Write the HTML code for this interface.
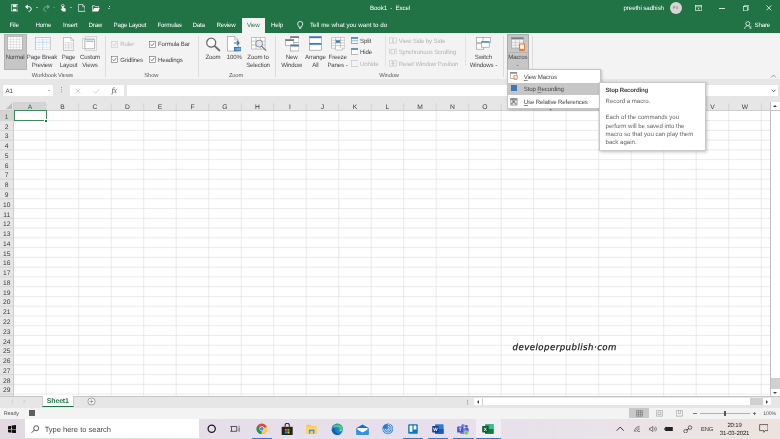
<!DOCTYPE html>
<html><head><meta charset="utf-8"><title>Book1 - Excel</title>
<style>
*{box-sizing:border-box;margin:0;padding:0}
html,body{width:780px;height:439px;overflow:hidden;background:#fff}
body{font-family:"Liberation Sans",sans-serif;font-size:6px;color:#333;position:relative;text-rendering:geometricPrecision}
.a{position:absolute;white-space:nowrap}
.c{text-align:center}
#green{left:0;top:0;width:780px;height:33px;background:#217346}
.tt{margin-top:1px;color:#fff;font-size:6.2px;line-height:8px}
.tab{margin-top:1px;color:#fff;font-size:6.2px;line-height:8px;top:21px;letter-spacing:-.2px}
#ribbon{left:0;top:33px;width:780px;height:46px;background:#f3f3f3}
.sep{width:1px;top:36px;height:41px;background:#dcdcdc}
.rl{margin-top:.7px;font-size:6.1px;line-height:8px;letter-spacing:-.15px;color:#464646;text-align:center;transform:translateX(-50%)}
.gl{margin-top:1.3px;font-size:5.8px;line-height:7px;letter-spacing:-.15px;color:#5a5a5a;top:72px;transform:translateX(-50%)}
.sm{margin-top:1.2px;font-size:6.1px;line-height:8px;letter-spacing:-.15px;color:#464646}
.dis{color:#b5b5b5}
.cb{width:6.4px;height:6.4px;border:0.8px solid #777;background:#fff}
#fbar{left:0;top:79px;width:780px;height:23px;background:#e6e6e6}
#grid{left:0;top:101px;width:780px;height:295px;background:#fff}
.ch{top:101.9px;height:8.9px;font-size:6.7px;line-height:11.4px;color:#3a3a3a;text-align:center;width:32.5px}
.rh{left:0;width:13.4px;font-size:6.7px;line-height:13.2px;color:#3a3a3a;text-align:center;height:9.77px}
.ar{display:inline-block;width:0;height:0;border-left:1.3px solid transparent;border-right:1.3px solid transparent;border-top:1.5px solid #666;margin-left:1.8px;vertical-align:1.5px}
u{text-decoration-thickness:.5px;text-underline-offset:.6px;text-decoration-color:#8a8a8a}
</style></head><body><div style="position:absolute;left:0;top:0;width:780px;height:439px;will-change:transform">

<div class="a" id="green"></div>

<!-- title bar -->
<div class="a tt" style="left:370px;top:3.5px;letter-spacing:-.1px">Book1&nbsp; -&nbsp; Excel</div>
<div class="a tt" style="left:623.5px;top:3.5px;letter-spacing:-.1px">preethi sadhish</div>
<div class="a" style="left:669.5px;top:2px;width:12px;height:12px;border-radius:50%;background:#d9d5d6;color:#666;font-size:4px;line-height:12px;text-align:center">PS</div>

<!-- tabs -->
<div class="a" style="left:242.2px;top:17.7px;width:23.1px;height:15.3px;background:#f3f3f3"></div>
<div class="a tab" style="left:9.5px">File</div>
<div class="a tab" style="left:35.5px">Home</div>
<div class="a tab" style="left:63px">Insert</div>
<div class="a tab" style="left:88.5px">Draw</div>
<div class="a tab" style="left:113.5px">Page Layout</div>
<div class="a tab" style="left:157.5px">Formulas</div>
<div class="a tab" style="left:192.5px">Data</div>
<div class="a tab" style="left:216.5px">Review</div>
<div class="a tab" style="left:247px;color:#217346">View</div>
<div class="a tab" style="left:271px">Help</div>
<div class="a tab" style="left:310px;letter-spacing:.03px">Tell me what you want to do</div>
<div class="a tab" style="left:754.5px">Share</div>


<!-- QAT -->
<svg class="a" style="left:10.600px;top:4.400px" width="7.600" height="7.400" viewBox="0 0 7.600 7.400"><path d="M.4 .4h6l.8 .8v5.800h-6.800z" fill="none" stroke="#fff" stroke-width=".7"/><rect x="1.800" y=".6" width="3.800" height="2.600" fill="#fff" opacity=".9"/><rect x="2" y="4.800" width="3.400" height="2.200" fill="#fff" opacity=".9"/></svg>
<svg class="a" style="left:24.800px;top:4.400px" width="8" height="7.600" viewBox="0 0 8 7.600"><path d="M.8 2.800h4a2.400 2.400 0 0 1 0 4.400h-1.200" fill="none" stroke="#fff" stroke-width="1"/><path d="M0 2.800l2.800-2.400v4.800z" fill="#fff"/></svg>
<div class="a" style="left:35.600px;top:7.400px;width:0;height:0;border-left:1.200px solid transparent;border-right:1.200px solid transparent;border-top:1.400px solid #fff"></div>
<svg class="a" style="left:42.400px;top:4.400px;opacity:.38" width="8" height="7.600" viewBox="0 0 8 7.600"><path d="M7.200 2.800h-4a2.400 2.400 0 0 0 0 4.400h1.200" fill="none" stroke="#fff" stroke-width="1"/><path d="M8 2.800l-2.800-2.400v4.800z" fill="#fff"/></svg>
<div class="a" style="left:53.200px;top:7.400px;width:0;height:0;border-left:1.200px solid transparent;border-right:1.200px solid transparent;border-top:1.400px solid #fff;opacity:.4"></div>
<svg class="a" style="left:59.600px;top:4px" width="6.400" height="8" viewBox="0 0 6.400 8"><circle cx="2.800" cy="1.800" r="1.400" fill="none" stroke="#fff" stroke-width=".6"/><path d="M2.200 2v3l-1.200-.6l-.4 .6l2 2.600h3v-3l-2-.8v-1.800z" fill="#fff"/></svg>
<div class="a" style="left:69.800px;top:7.400px;width:0;height:0;border-left:1.200px solid transparent;border-right:1.200px solid transparent;border-top:1.400px solid #fff"></div>
<svg class="a" style="left:77.800px;top:4.200px" width="7.400" height="7.800" viewBox="0 0 7.400 7.800"><path d="M.4 .4h4.200l2.400 2.400v4.600h-6.600z" fill="none" stroke="#fff" stroke-width=".7"/><path d="M4.600 .4v2.400h2.400" fill="none" stroke="#fff" stroke-width=".5"/></svg>
<svg class="a" style="left:91.600px;top:4.600px" width="8" height="7" viewBox="0 0 8 7"><path d="M.4 6.400v-5.600h2.400l.8 .8h3v1.200" fill="none" stroke="#fff" stroke-width=".7"/><path d="M.4 6.400l1.600-3.400h5.800l-1.600 3.400z" fill="#fff"/></svg>
<div class="a" style="left:108.800px;top:6.200px;width:1.600px;height:.6px;background:#fff"></div>
<div class="a" style="left:108.400px;top:8px;width:0;height:0;border-left:1.200px solid transparent;border-right:1.200px solid transparent;border-top:1.400px solid #fff"></div>
<!-- window controls -->
<svg class="a" style="left:694.600px;top:5.200px" width="7.200" height="5.760" viewBox="0 0 8 6.400"><rect x=".4" y=".4" width="7.200" height="5.600" fill="none" stroke="#fff" stroke-width=".7"/><path d="M.4 2h7.200" stroke="#fff" stroke-width=".6"/><path d="M2.800 4.600l1.200-1.400l1.200 1.400z" fill="#fff"/></svg>
<div class="a" style="left:719px;top:7.800px;width:6.400px;height:.7px;background:#fff;opacity:.8"></div>
<svg class="a" style="left:742.600px;top:4.600px" width="6.200" height="6.200" viewBox="0 0 7 7"><rect x=".4" y="1.800" width="4.800" height="4.800" fill="none" stroke="#fff" stroke-width=".7"/><path d="M1.800 1.800v-1.400h4.800v4.800h-1.400" fill="none" stroke="#fff" stroke-width=".7"/></svg>
<svg class="a" style="left:765.800px;top:5px" width="5.800" height="5.800" viewBox="0 0 6.400 6.400"><path d="M.4 .4l5.600 5.600M6 .4l-5.600 5.600" stroke="#fff" stroke-width=".8"/></svg>
<!-- bulb, share -->
<svg class="a" style="left:297.400px;top:20.600px" width="6.400" height="8.800" viewBox="0 0 6.400 8.800"><path d="M2 6.200c0-1.200-1.400-1.800-1.400-3.200a2.600 2.600 0 0 1 5.200 0c0 1.400-1.400 2-1.400 3.200z" fill="none" stroke="#fff" stroke-width=".8"/><path d="M2.100 7.200h2.200M2.400 8.300h1.600" stroke="#fff" stroke-width=".8"/></svg>
<svg class="a" style="left:744.400px;top:21px" width="8" height="8.400" viewBox="0 0 8 8.400"><circle cx="3.800" cy="2.600" r="2" fill="none" stroke="#fff" stroke-width=".7"/><path d="M.6 8c0-2 1.400-3.200 3.200-3.200s3.200 1.200 3.200 3.200" fill="none" stroke="#fff" stroke-width=".7"/><path d="M5 7.600l2.600-2.600" stroke="#fff" stroke-width=".6"/></svg>

<!-- ribbon -->
<div class="a" id="ribbon"></div>
<div class="a sep" style="left:105.2px"></div>
<div class="a sep" style="left:198px"></div>
<div class="a sep" style="left:275px"></div>
<div class="a sep" style="left:384.8px;height:30px;background:#e2e2e2"></div>
<div class="a sep" style="left:465.3px;height:30px;background:#e2e2e2"></div>
<div class="a sep" style="left:502.8px"></div>
<div class="a sep" style="left:532px"></div>

<!-- workbook views -->
<div class="a" style="left:4px;top:34px;width:22.7px;height:35.6px;background:#c6c6c6;border:0.5px solid #b3b3b3"></div>
<svg class="a" style="left:7px;top:36.400px" width="16" height="14.400" viewBox="0 0 16 14.400"><rect x=".5" y=".5" width="14.800" height="13.400" fill="#fff" stroke="#9c9c9c" stroke-width=".6"/><path d="M3.500 .5v13.400M6.400 .5v13.400M9.400 .5v13.400M12.400 .5v13.400M.5 3.200h14.800M.5 5.900h14.800M.5 8.600h14.800M.5 11.300h14.800" stroke="#c4c4c4" stroke-width=".45" fill="none"/></svg>
<svg class="a" style="left:34.800px;top:37px" width="16" height="13.400" viewBox="0 0 16 13.400"><rect x=".4" y=".4" width="14.800" height="12.600" fill="#fff" stroke="#a6a6a6" stroke-width=".6"/><path d="M4 .4v12.600M11.600 .4v12.600M.4 2.800h14.800M.4 7.800h14.800M.4 10.400h14.800" stroke="#cfe0f2" stroke-width=".6" fill="none"/><path d="M7.800 .4v12.600M.4 5.300h14.800" stroke="#a4c2e4" stroke-width=".6" fill="none"/></svg>
<svg class="a" style="left:62.800px;top:36.800px" width="11.400" height="14" viewBox="0 0 11.400 14"><path d="M.4 .4h7.400l3 3v10.200h-10.400z" fill="#fff" stroke="#949494" stroke-width=".6"/><path d="M7.800 .4v3h3" fill="none" stroke="#949494" stroke-width=".5"/><path d="M2 5.600h7.200v6.400h-7.200zM2 7.200h7.200M2 8.800h7.200M2 10.400h7.200M5.600 5.600v6.400" fill="none" stroke="#c2c2c2" stroke-width=".45"/></svg>
<svg class="a" style="left:82.400px;top:36.200px" width="15.400" height="15" viewBox="0 0 15.400 15"><rect x=".4" y="2.800" width="11.800" height="9.800" fill="#f7f7f7" stroke="#b4b4b4" stroke-width=".5"/><rect x="3" y=".4" width="11.800" height="14.200" fill="none" stroke="#b8b8b8" stroke-width=".5"/><rect x="3" y="3.300" width="9.700" height="9.500" fill="#fff" stroke="#9a9a9a" stroke-width=".6"/><rect x="4.100" y="4.500" width="7.500" height="1.600" fill="#a9c7ea"/></svg>
<div class="a rl" style="left:15px;top:53.4px">Normal</div>
<div class="a rl" style="left:42px;top:53.4px">Page Break<br>Preview</div>
<div class="a rl" style="left:68.5px;top:53.4px">Page<br>Layout</div>
<div class="a rl" style="left:90px;top:53.4px">Custom<br>Views</div>
<div class="a gl" style="left:52.3px">Workbook Views</div>

<!-- show -->
<svg class="a" style="left:111.0px;top:40.6px" width="7" height="7" viewBox="0 0 7 7"><rect x=".5" y=".5" width="6" height="6" fill="#f1f1f1" stroke="#c8c8c8" stroke-width=".6"/><path d="M1.700 3.500l1.200 1.300l2.400-3" fill="none" stroke="#c4c4c4" stroke-width=".65"/></svg>
<svg class="a" style="left:149.0px;top:40.6px" width="7" height="7" viewBox="0 0 7 7"><rect x=".5" y=".5" width="6" height="6" fill="#fff" stroke="#6e6e6e" stroke-width=".6"/><path d="M1.700 3.500l1.200 1.300l2.400-3" fill="none" stroke="#3c3c3c" stroke-width=".65"/></svg>
<svg class="a" style="left:111.0px;top:56.1px" width="7" height="7" viewBox="0 0 7 7"><rect x=".5" y=".5" width="6" height="6" fill="#fff" stroke="#6e6e6e" stroke-width=".6"/><path d="M1.700 3.500l1.200 1.300l2.400-3" fill="none" stroke="#3c3c3c" stroke-width=".65"/></svg>
<svg class="a" style="left:149.0px;top:56.1px" width="7" height="7" viewBox="0 0 7 7"><rect x=".5" y=".5" width="6" height="6" fill="#fff" stroke="#6e6e6e" stroke-width=".6"/><path d="M1.700 3.500l1.200 1.300l2.400-3" fill="none" stroke="#3c3c3c" stroke-width=".65"/></svg>
<div class="a sm dis" style="left:120.3px;top:40px">Ruler</div>
<div class="a sm" style="left:158px;top:40px">Formula Bar</div>
<div class="a sm" style="left:120.3px;top:55.8px">Gridlines</div>
<div class="a sm" style="left:158px;top:55.8px">Headings</div>
<div class="a gl" style="left:151.3px">Show</div>

<!-- zoom group -->
<svg class="a" style="left:205px;top:37px" width="16" height="15" viewBox="0 0 16 15"><circle cx="6.200" cy="5.600" r="4.500" fill="#fbfbfb" stroke="#6b6b6b" stroke-width="1.300"/><path d="M9.800 9.200l4.600 4.300" stroke="#6b6b6b" stroke-width="1.800" stroke-linecap="round"/></svg>
<svg class="a" style="left:227px;top:36.4px" width="14.4" height="15.6" viewBox="0 0 14.4 15.6"><path d="M.5 .5h7.3l3.4 3.4v11.2h-10.7z" fill="#fff" stroke="#9a9a9a" stroke-width=".7"/><path d="M7.8 .5v3.4h3.4" fill="none" stroke="#9a9a9a" stroke-width=".6"/><path d="M7 7h4.6M9.8 4.9l2.2 2.1l-2.2 2.1" fill="none" stroke="#2e75b6" stroke-width="1.2"/><rect x="7" y="11" width="7" height="4.2" fill="#2e75b6"/><path d="M8.2 12.2v1.9M9.8 12.2h1.2v1.9h-1.2zM12 12.2h1.2v1.9h-1.2z" stroke="#fff" stroke-width=".4" fill="none"/></svg>
<svg class="a" style="left:250.6px;top:37px" width="16" height="15" viewBox="0 0 16 15"><path d="M.5 .5h13.6v11.6h-13.6zM.5 4.2h13.6M.5 8h13.6M5 .5v11.6M9.6 .5v11.6" fill="#fff" stroke="#a0a0a0" stroke-width=".6"/><circle cx="8.2" cy="6.6" r="3.5" fill="#dbe8f6" stroke="#777" stroke-width=".8"/><path d="M10.8 9.4l4 4" stroke="#777" stroke-width="1.3" stroke-linecap="round"/></svg>
<div class="a rl" style="left:213px;top:53.4px">Zoom</div>
<div class="a rl" style="left:234.2px;top:53.4px">100%</div>
<div class="a rl" style="left:258px;top:53.4px">Zoom to<br>Selection</div>
<div class="a gl" style="left:236px">Zoom</div>

<!-- window group -->
<svg class="a" style="left:284.6px;top:36.4px" width="14.6" height="15.4" viewBox="0 0 14.6 15.4"><rect x="5.6" y=".4" width="8.4" height="6" fill="#fff" stroke="#8c8c8c" stroke-width=".6"/><rect x="5.6" y=".4" width="8.4" height="1.6" fill="#7a7a7a"/><rect x=".4" y="3.4" width="8.4" height="6" fill="#fff" stroke="#8c8c8c" stroke-width=".6"/><rect x=".4" y="3.4" width="8.4" height="1.6" fill="#7a7a7a"/><rect x="5.6" y="8.8" width="8.4" height="6.2" fill="#fff" stroke="#8c8c8c" stroke-width=".6"/><rect x="5.6" y="8.8" width="8.4" height="1.7" fill="#3b7dc4"/></svg>
<svg class="a" style="left:309.4px;top:36.4px" width="12.8" height="14.6" viewBox="0 0 12.8 14.6"><rect x=".4" y=".4" width="12" height="13.8" fill="#fff" stroke="#8c8c8c" stroke-width=".6"/><rect x=".4" y=".4" width="12" height="1.8" fill="#3b7dc4"/><rect x=".4" y="7" width="12" height="1.8" fill="#3b7dc4"/></svg>
<svg class="a" style="left:331px;top:37px" width="14.4" height="13.6" viewBox="0 0 14.4 13.6"><path d="M.4 .4h13.6v10.8h-13.6zM.4 3.2h13.6M.4 6h13.6M.4 8.6h13.6M4.6 .4v10.8M9.4 .4v10.8" fill="#fff" stroke="#a2a2a2" stroke-width=".6"/><rect x="4.8" y="3.3" width="4.4" height="2.5" fill="#3b7dc4"/><path d="M4.6 10v3h6.8v-2" fill="#fff" stroke="#a2a2a2" stroke-width=".6"/></svg>
<div class="a rl" style="left:291.7px;top:53.4px">New<br>Window</div>
<div class="a rl" style="left:315.4px;top:53.4px">Arrange<br>All</div>
<div class="a rl" style="left:337.6px;top:53.4px">Freeze<br>Panes<i class="ar"></i></div>

<svg class="a" style="left:350.6px;top:37px" width="7.6" height="6.8" viewBox="0 0 7.6 6.8"><rect x=".4" y=".4" width="6.8" height="6" fill="#fff" stroke="#777" stroke-width=".6"/><rect x=".4" y=".4" width="6.8" height="1.4" fill="#3b7dc4"/><path d="M.4 3.8h6.8" stroke="#3b7dc4" stroke-width=".6"/></svg>
<svg class="a" style="left:350.6px;top:48.4px" width="7.6" height="6.8" viewBox="0 0 7.6 6.8"><rect x=".4" y=".4" width="6.8" height="6" fill="#fff" stroke="#8a8a8a" stroke-width=".6"/><rect x=".4" y=".4" width="6.8" height="1.4" fill="#3b7dc4"/></svg>
<svg class="a" style="left:350.6px;top:60.4px" width="7.6" height="6.8" viewBox="0 0 7.6 6.8"><rect x=".4" y=".4" width="6.8" height="6" fill="#f6f3f6" stroke="#c3bcc3" stroke-width=".6"/></svg>
<div class="a sm" style="left:360px;top:36.4px">Split</div>
<div class="a sm" style="left:360px;top:47.8px">Hide</div>
<div class="a sm dis" style="left:360px;top:59.8px">Unhide</div>

<svg class="a" style="left:389px;top:37px" width="8" height="6.8" viewBox="0 0 8 6.8"><path d="M.4 .8h3v5.4h-3zM4.4 .8h3v5.4h-3z" fill="#f6f6f6" stroke="#bdbdbd" stroke-width=".6"/></svg>
<svg class="a" style="left:389px;top:48.4px" width="8" height="6.8" viewBox="0 0 8 6.8"><path d="M.4 .4v6M2 1.4h3.6v4.4h-3.6zM7.2 .4v6" fill="none" stroke="#bdbdbd" stroke-width=".6"/></svg>
<svg class="a" style="left:389px;top:60.4px" width="8" height="6.8" viewBox="0 0 8 6.8"><path d="M.4 .6h3v5.6h-3zM4.4 .6h3v5.6h-3zM2 3.4h4" fill="#f6f6f6" stroke="#bdbdbd" stroke-width=".6"/></svg>
<div class="a sm dis" style="left:398.7px;top:36.4px">View Side by Side</div>
<div class="a sm dis" style="left:398.7px;top:47.8px">Synchronous Scrolling</div>
<div class="a sm dis" style="left:398.7px;top:59.8px">Reset Window Position</div>

<svg class="a" style="left:476px;top:36.8px" width="15" height="12.8" viewBox="0 0 15 12.8"><rect x=".4" y=".4" width="7.4" height="5.4" fill="#fff" stroke="#8c8c8c" stroke-width=".6"/><rect x=".4" y="6.8" width="7.4" height="5.4" fill="#fff" stroke="#8c8c8c" stroke-width=".6"/><rect x="7" y=".4" width="7.4" height="5.4" fill="#fff" stroke="#8c8c8c" stroke-width=".6"/><rect x="5.6" y="4.4" width="7.6" height="5.8" fill="#fff" stroke="#8c8c8c" stroke-width=".6"/><rect x="5.6" y="4.4" width="7.6" height="1.3" fill="#3b7dc4"/></svg>
<div class="a rl" style="left:483.4px;top:53.4px">Switch<br>Windows<i class="ar"></i></div>
<div class="a gl" style="left:389px">Window</div>

<!-- macros -->
<div class="a" style="left:507.2px;top:34px;width:21.8px;height:35.6px;background:#c6c6c6;border:0.5px solid #ababab"></div><div class="a" style="left:507.6px;top:51.8px;width:21px;height:.6px;background:#b2b2b2"></div>
<svg class="a" style="left:510.6px;top:36.6px" width="14.8" height="14.4" viewBox="0 0 14.8 14.4"><rect x=".4" y=".4" width="12" height="10.6" fill="#f4f4f4" stroke="#9a9a9a" stroke-width=".6"/><rect x=".4" y=".4" width="12" height="2" fill="#7d7d7d"/><path d="M.4 5.4h12M.4 8.2h12M4.4 2.4v8.6M8.4 2.4v8.6" stroke="#b5b5b5" stroke-width=".5"/><path d="M8 6.4h6.2v6.6l-1.4 1h-4.8z" fill="#ed7d31"/><rect x="9.2" y="7.6" width="3.8" height="4.2" fill="#fff"/></svg>
<div class="a rl" style="left:517.8px;top:53.4px">Macros<br><i class="ar" style="margin-left:0"></i></div>

<svg class="a" style="left:769.6px;top:74px" width="7" height="4.400" viewBox="0 0 7 4.400"><path d="M1 3.600l2.500-2.600l2.500 2.600" fill="none" stroke="#777" stroke-width=".7"/></svg>

<!-- formula bar -->
<div class="a" id="fbar"></div>

<div class="a" style="left:2.5px;top:84.7px;width:50.8px;height:11.6px;background:#fff"></div>
<div class="a" style="left:5.5px;top:87.9px;font-size:6.2px;line-height:8px;color:#444;letter-spacing:-.1px">A1</div>
<div class="a" style="left:47.6px;top:89.6px;width:0;height:0;border-left:1.7px solid transparent;border-right:1.7px solid transparent;border-top:1.9px solid #666"></div>
<div class="a" style="left:61.3px;top:87.4px;width:.8px;height:.8px;background:#999;box-shadow:0 2.2px 0 #999,0 4.4px 0 #999"></div>
<div class="a" style="left:69.7px;top:84.7px;width:54.3px;height:11.6px;background:#fff"></div>
<svg class="a" style="left:75px;top:87.6px" width="6" height="6" viewBox="0 0 6 6"><path d="M.8 .8l4.4 4.4M5.200 .8l-4.400 4.400" stroke="#c2c2c2" stroke-width=".7"/></svg>
<svg class="a" style="left:93.4px;top:87.6px" width="7" height="6" viewBox="0 0 7 6"><path d="M.8 3.200l1.800 2l3.600-4.400" fill="none" stroke="#c2c2c2" stroke-width=".7"/></svg>
<div class="a" style="left:111.6px;top:85.6px;font-family:'Liberation Serif',serif;font-style:italic;font-size:8px;line-height:9px;color:#555;letter-spacing:-.3px">fx</div>
<div class="a" style="left:126.7px;top:84.7px;width:651.5px;height:11.6px;background:#fff"></div>
<svg class="a" style="left:771.200px;top:88.800px" width="5.400" height="3.600" viewBox="0 0 5.400 3.600"><path d="M.7 .7l2 2l2-2" fill="none" stroke="#555" stroke-width=".9"/></svg>

<!--GRID_START-->
<div class="a" style="left:0;top:101.9px;width:780px;height:293.7px;background:#fff"></div>
<div class="a" style="left:0;top:101.9px;width:771px;height:8.9px;background:#e6e6e6"></div>
<div class="a" style="left:0;top:110.8px;width:13.7px;height:284.8px;background:#e6e6e6"></div>
<svg class="a" style="left:0;top:0" width="780" height="439" viewBox="0 0 780 439"><path d="M46.20 110.8V395.6M78.70 110.8V395.6M111.20 110.8V395.6M143.70 110.8V395.6M176.20 110.8V395.6M208.70 110.8V395.6M241.20 110.8V395.6M273.70 110.8V395.6M306.20 110.8V395.6M338.70 110.8V395.6M371.20 110.8V395.6M403.70 110.8V395.6M436.20 110.8V395.6M468.70 110.8V395.6M501.20 110.8V395.6M533.70 110.8V395.6M566.20 110.8V395.6M598.70 110.8V395.6M631.20 110.8V395.6M663.70 110.8V395.6M696.20 110.8V395.6M728.70 110.8V395.6M761.20 110.8V395.6M13.7 120.57H770.6M13.7 130.34H770.6M13.7 140.11H770.6M13.7 149.88H770.6M13.7 159.65H770.6M13.7 169.42H770.6M13.7 179.19H770.6M13.7 188.96H770.6M13.7 198.73H770.6M13.7 208.50H770.6M13.7 218.27H770.6M13.7 228.04H770.6M13.7 237.81H770.6M13.7 247.58H770.6M13.7 257.35H770.6M13.7 267.12H770.6M13.7 276.89H770.6M13.7 286.66H770.6M13.7 296.43H770.6M13.7 306.20H770.6M13.7 315.97H770.6M13.7 325.74H770.6M13.7 335.51H770.6M13.7 345.28H770.6M13.7 355.05H770.6M13.7 364.82H770.6M13.7 374.59H770.6M13.7 384.36H770.6M13.7 394.13H770.6" stroke="#dddddd" stroke-width=".6" fill="none"/><path d="M46.20 103.3V110.3M78.70 103.3V110.3M111.20 103.3V110.3M143.70 103.3V110.3M176.20 103.3V110.3M208.70 103.3V110.3M241.20 103.3V110.3M273.70 103.3V110.3M306.20 103.3V110.3M338.70 103.3V110.3M371.20 103.3V110.3M403.70 103.3V110.3M436.20 103.3V110.3M468.70 103.3V110.3M501.20 103.3V110.3M533.70 103.3V110.3M566.20 103.3V110.3M598.70 103.3V110.3M631.20 103.3V110.3M663.70 103.3V110.3M696.20 103.3V110.3M728.70 103.3V110.3M761.20 103.3V110.3M0 120.57H13.7M0 130.34H13.7M0 140.11H13.7M0 149.88H13.7M0 159.65H13.7M0 169.42H13.7M0 179.19H13.7M0 188.96H13.7M0 198.73H13.7M0 208.50H13.7M0 218.27H13.7M0 228.04H13.7M0 237.81H13.7M0 247.58H13.7M0 257.35H13.7M0 267.12H13.7M0 276.89H13.7M0 286.66H13.7M0 296.43H13.7M0 306.20H13.7M0 315.97H13.7M0 325.74H13.7M0 335.51H13.7M0 345.28H13.7M0 355.05H13.7M0 364.82H13.7M0 374.59H13.7M0 384.36H13.7M0 394.13H13.7" stroke="#c8c8c8" stroke-width=".6" fill="none"/></svg>
<div class="a" style="left:0;top:110.4px;width:771px;height:.7px;background:#cecece"></div>
<div class="a" style="left:13.3px;top:101.9px;width:.7px;height:293.7px;background:#cecece"></div>
<div class="a ch" style="left:13.7px;background:#d4d4d4;color:#217346">A</div><div class="a ch" style="left:46.2px">B</div><div class="a ch" style="left:78.7px">C</div><div class="a ch" style="left:111.2px">D</div><div class="a ch" style="left:143.7px">E</div><div class="a ch" style="left:176.2px">F</div><div class="a ch" style="left:208.7px">G</div><div class="a ch" style="left:241.2px">H</div><div class="a ch" style="left:273.7px">I</div><div class="a ch" style="left:306.2px">J</div><div class="a ch" style="left:338.7px">K</div><div class="a ch" style="left:371.2px">L</div><div class="a ch" style="left:403.7px">M</div><div class="a ch" style="left:436.2px">N</div><div class="a ch" style="left:468.7px">O</div><div class="a ch" style="left:501.2px">P</div><div class="a ch" style="left:533.7px">Q</div><div class="a ch" style="left:566.2px">R</div><div class="a ch" style="left:598.7px">S</div><div class="a ch" style="left:631.2px">T</div><div class="a ch" style="left:663.7px">U</div><div class="a ch" style="left:696.2px">V</div><div class="a ch" style="left:728.7px">W</div><div class="a rh" style="top:110.80px;background:#d4d4d4;color:#217346">1</div><div class="a rh" style="top:120.57px">2</div><div class="a rh" style="top:130.34px">3</div><div class="a rh" style="top:140.11px">4</div><div class="a rh" style="top:149.88px">5</div><div class="a rh" style="top:159.65px">6</div><div class="a rh" style="top:169.42px">7</div><div class="a rh" style="top:179.19px">8</div><div class="a rh" style="top:188.96px">9</div><div class="a rh" style="top:198.73px">10</div><div class="a rh" style="top:208.50px">11</div><div class="a rh" style="top:218.27px">12</div><div class="a rh" style="top:228.04px">13</div><div class="a rh" style="top:237.81px">14</div><div class="a rh" style="top:247.58px">15</div><div class="a rh" style="top:257.35px">16</div><div class="a rh" style="top:267.12px">17</div><div class="a rh" style="top:276.89px">18</div><div class="a rh" style="top:286.66px">19</div><div class="a rh" style="top:296.43px">20</div><div class="a rh" style="top:306.20px">21</div><div class="a rh" style="top:315.97px">22</div><div class="a rh" style="top:325.74px">23</div><div class="a rh" style="top:335.51px">24</div><div class="a rh" style="top:345.28px">25</div><div class="a rh" style="top:355.05px">26</div><div class="a rh" style="top:364.82px">27</div><div class="a rh" style="top:374.59px">28</div><div class="a rh" style="top:384.36px">29</div>
<div class="a" style="left:6px;top:103.2px;width:0;height:0;border-left:6.4px solid transparent;border-bottom:6.4px solid #bdbdbd"></div>
<div class="a" style="left:13.5px;top:110.3px;width:33.4px;height:10.7px;border:1px solid #3f8a5f"></div>
<div class="a" style="left:45.3px;top:119.7px;width:2.2px;height:2.2px;background:#217346;outline:.5px solid #fff"></div>
<!--GRID_END-->
<!-- v scrollbar -->
<div class="a" style="left:770.6px;top:101.9px;width:9.4px;height:293.7px;background:#e6e6e6;border-left:.8px solid #c0c0c0"></div><div class="a" style="left:771.4px;top:102.4px;width:8.6px;height:293.2px;background:#fff"></div><div class="a" style="left:770.4px;top:102px;width:.9px;height:293.600px;background:#c2c2c2"></div>
<div class="a" style="left:771.4px;top:377.8px;width:8.6px;height:10.8px;background:#d0d0d0"></div>
<div class="a" style="left:771.4px;top:110.2px;width:8.6px;height:.7px;background:#c6c6c6"></div>
<div class="a" style="left:773.4px;top:104.800px;width:0;height:0;border-left:2.2px solid transparent;border-right:2.2px solid transparent;border-bottom:2.400px solid #444"></div>
<div class="a" style="left:773.4px;top:391.6px;width:0;height:0;border-left:2.2px solid transparent;border-right:2.2px solid transparent;border-top:2.400px solid #444"></div>

<div class="a" style="left:512.5px;top:341.2px;font-family:'DejaVu Sans',sans-serif;font-style:italic;font-size:8.6px;line-height:14px;color:#1c1c1c;letter-spacing:.46px;-webkit-text-stroke:.25px #1c1c1c" id="wm">developerpublish&#183;com</div>



<!-- dropdown -->
<div class="a" style="left:507.4px;top:69.2px;width:93.4px;height:39.6px;background:#fff;border:.6px solid #c6c6c6;box-shadow:1px 1px 2.500px rgba(0,0,0,.22)"></div>
<div class="a" style="left:508px;top:82.8px;width:92.200px;height:12.100px;background:#c6c6c6"></div>
<svg class="a" style="left:510px;top:72.2px" width="8" height="8" viewBox="0 0 8 8"><rect x=".4" y=".4" width="6.4" height="6" fill="#fff" stroke="#8a8a8a" stroke-width=".6"/><rect x=".4" y=".4" width="6.400" height="1.200" fill="#777"/><path d="M3.600 3.200h4v3.800l-.9 .8h-3.100z" fill="#ed7d31"/><rect x="4.500" y="4" width="2.200" height="2.600" fill="#fff"/></svg>
<div class="a" style="left:510.600px;top:85.2px;width:6.400px;height:6.200px;background:#3f75b8"></div>
<svg class="a" style="left:510px;top:98px" width="8" height="8" viewBox="0 0 8 8"><path d="M.4 .4h6.800v6.800h-6.800zM.4 2.600h6.800M.4 4.800h6.800M2.600 .4v6.800M4.800 .4v6.800" fill="#fff" stroke="#8f8f8f" stroke-width=".6"/><rect x=".4" y=".4" width="6.800" height="1.400" fill="#7d7d7d"/><rect x="2.800" y="2.800" width="1.800" height="1.800" fill="#3f75b8"/><rect x="1" y="5.200" width="1.400" height="1.400" fill="#d9534f"/><rect x="5.200" y="5.200" width="1.400" height="1.400" fill="#d9534f"/></svg>
<div class="a sm" style="left:523.8px;top:72.6px"><u>V</u>iew Macros</div>
<div class="a sm" style="left:523.8px;top:84.8px">Stop <u>R</u>ecording</div>
<div class="a sm" style="left:523.8px;top:98.2px"><u>U</u>se Relative References</div>

<!-- tooltip -->
<div class="a" style="left:599px;top:82.2px;width:107.400px;height:68.400px;background:#fff;border:.6px solid #c9c9c9;box-shadow:1px 1px 3px rgba(0,0,0,.25)"></div>
<div class="a sm" style="left:605.5px;top:86px;font-weight:bold;color:#444;letter-spacing:-.2px">Stop Recording</div>
<div class="a sm" style="left:605.5px;top:96.8px;color:#666;letter-spacing:-.02px">Record a macro.</div>
<div class="a sm" style="left:605.5px;top:113.2px;color:#666;line-height:8.25px;letter-spacing:-.01px">Each of the commands you<br>perform will be saved into the<br>macro so that you can play them<br>back again.</div>

<!-- sheet tabs -->
<div class="a" style="left:0;top:395.6px;width:780px;height:12px;background:#e6e6e6;border-top:.7px solid #c4c4c4"></div>
<div class="a" style="left:41.8px;top:395.6px;width:32px;height:11px;background:#fff;border-bottom:1.2px solid #217346;border-left:.6px solid #cfcfcf;border-right:.6px solid #cfcfcf"></div>
<div class="a" style="left:57.8px;top:397.7px;font-size:7px;line-height:8.6px;font-weight:bold;color:#217346;letter-spacing:-.18px;transform:translateX(-50%)">Sheet1</div>
<svg class="a" style="left:10px;top:399px" width="18" height="5" viewBox="0 0 18 5"><path d="M3.400 .6l-1.800 1.900l1.800 1.900M13.200 .6l1.800 1.900l-1.800 1.900" fill="none" stroke="#c2c2c2" stroke-width=".7"/></svg>
<svg class="a" style="left:87px;top:397.400px" width="9" height="9" viewBox="0 0 9 9"><circle cx="4.500" cy="4.500" r="3.600" fill="#f4f4f4" stroke="#777" stroke-width=".6"/><path d="M4.500 2.600v3.800M2.600 4.500h3.800" stroke="#777" stroke-width=".6"/></svg>
<div class="a" style="left:467.200px;top:399.600px;width:.8px;height:.8px;background:#999;box-shadow:0 1.800px 0 #999,0 3.600px 0 #999"></div>
<!-- h scrollbar -->
<div class="a" style="left:474.200px;top:398.300px;width:296.800px;height:6.800px;background:#d0d0d0"></div>
<div class="a" style="left:474.200px;top:398.300px;width:7.400px;height:6.800px;background:#fff"></div>
<div class="a" style="left:482.500px;top:398.300px;width:267.500px;height:6.800px;background:#fff"></div>
<div class="a" style="left:763px;top:398.300px;width:8px;height:6.800px;background:#fff"></div>
<div class="a" style="left:476.800px;top:399.600px;width:0;height:0;border-top:2.100px solid transparent;border-bottom:2.100px solid transparent;border-right:2.400px solid #444"></div>
<div class="a" style="left:766px;top:399.600px;width:0;height:0;border-top:2.100px solid transparent;border-bottom:2.100px solid transparent;border-left:2.400px solid #444"></div>

<!-- status bar -->
<div class="a" style="left:0;top:407.600px;width:780px;height:11px;background:#f3f3f3"></div>
<div class="a" style="left:3.800px;top:410.800px;font-size:5.400px;line-height:7px;color:#555;letter-spacing:-.1px">Ready</div>
<div class="a" style="left:29.200px;top:410.200px;width:5.400px;height:5.400px;background:#5e5e5e"></div>
<div class="a" style="left:629.200px;top:408px;width:19.900px;height:10.400px;background:#c8c8c8"></div>
<svg class="a" style="left:636px;top:410px" width="7" height="6.600" viewBox="0 0 7 6.600"><path d="M.4 .4h6.200v5.800h-6.200zM.4 2.300h6.200M.4 4.300h6.200M2.500 .4v5.800M4.600 .4v5.800" fill="none" stroke="#666" stroke-width=".5"/></svg>
<svg class="a" style="left:656px;top:410px" width="7" height="6.600" viewBox="0 0 7 6.600"><path d="M.4 .4h6.200v5.800h-6.200zM2 2h3v2.600h-3z" fill="none" stroke="#8a8a8a" stroke-width=".5"/></svg>
<svg class="a" style="left:676px;top:410px" width="7" height="6.600" viewBox="0 0 7 6.600"><path d="M.4 .4h6.200v5.800h-6.200zM2.500 .4v3.200h2.100v-3.200" fill="none" stroke="#8a8a8a" stroke-width=".5"/></svg>
<div class="a" style="left:693.400px;top:413.200px;width:3.200px;height:.7px;background:#777"></div>
<div class="a" style="left:700px;top:413.200px;width:49.700px;height:.6px;background:#b0b0b0"></div>
<div class="a" style="left:724px;top:410.600px;width:1.800px;height:5.800px;background:#555"></div>
<div class="a" style="left:752.600px;top:413.200px;width:3.600px;height:.7px;background:#777"></div>
<div class="a" style="left:754.050px;top:411.700px;width:.7px;height:3.600px;background:#777"></div>
<div class="a" style="left:763.300px;top:410.900px;font-size:5.200px;line-height:7px;color:#555;letter-spacing:-.15px">100%</div>


<!-- taskbar -->
<div class="a" style="left:0;top:418.600px;width:780px;height:20.400px;background:linear-gradient(90deg,#e2d9e3 0,#e6dee9 30%,#e7e0ec 55%,#e9e2ea 75%,#ece4e2 92%,#ece3de 100%)"></div>
<div class="a" style="left:25px;top:419px;width:174px;height:19.400px;background:#fff"></div>
<svg class="a" style="left:8px;top:425px" width="8.400" height="8.400" viewBox="0 0 8.400 8.400"><path d="M0 1.200l3.500-.5v3.300h-3.500zM4 .6l4.400-.6v4h-4.400zM0 4.500h3.500v3.300l-3.500-.5zM4 4.500h4.400v3.900l-4.400-.6z" fill="#111"/></svg>
<svg class="a" style="left:30.600px;top:424.600px" width="8.400" height="8.400" viewBox="0 0 8.400 8.400"><circle cx="5.200" cy="3.200" r="2.500" fill="none" stroke="#333" stroke-width=".8"/><path d="M3.400 5l-2.800 2.800" stroke="#333" stroke-width=".9"/></svg>
<div class="a" style="left:44.700px;top:424.600px;font-size:7.500px;line-height:9px;color:#4a4a4a;letter-spacing:0">Type here to search</div>
<!-- cortana / taskview -->
<svg class="a" style="left:206.600px;top:424px" width="9.400" height="9.400" viewBox="0 0 9.400 9.400"><circle cx="4.700" cy="4.700" r="3.600" fill="none" stroke="#1a1a1a" stroke-width="1.250"/></svg>
<svg class="a" style="left:230.400px;top:425px" width="10" height="8" viewBox="0 0 10 8"><path d="M1.500 1.500h5.300v4.800h-5.300zM.3 1.500h1.200M.3 6.300h1.200M9.100 2.500v4.200" fill="none" stroke="#333" stroke-width=".8"/><rect x="8.700" y=".8" width=".8" height=".9" fill="#333"/></svg>
<!-- chrome -->
<svg class="a" style="left:256px;top:422.600px" width="11.600" height="11.600" viewBox="0 0 11 11"><circle cx="5.500" cy="5.500" r="5" fill="#db4437"/><path d="M5.500 5.500L1.200 3A5 5 0 0 0 5.200 10.500z" fill="#0f9d58"/><path d="M5.500 5.500L5.200 10.500A5 5 0 0 0 10.200 3.500z" fill="#ffcd40"/><circle cx="5.500" cy="5.500" r="2.300" fill="#fff"/><circle cx="5.500" cy="5.500" r="1.800" fill="#4285f4"/></svg>
<!-- store -->
<svg class="a" style="left:280.800px;top:422.600px" width="12.400" height="12.800" viewBox="0 0 11 11.400"><path d="M3.600 3.400v-1.200a1.900 1.900 0 0 1 3.800 0v1.200" fill="none" stroke="#222" stroke-width=".9"/><rect x=".6" y="3.400" width="9.800" height="7.600" fill="#222"/><rect x="3.400" y="5.200" width="1.800" height="1.800" fill="#f25022"/><rect x="5.700" y="5.200" width="1.800" height="1.800" fill="#7fba00"/><rect x="3.400" y="7.500" width="1.800" height="1.800" fill="#00a4ef"/><rect x="5.700" y="7.500" width="1.800" height="1.800" fill="#ffb900"/></svg>
<!-- explorer -->
<svg class="a" style="left:306.200px;top:424px" width="11.400" height="10" viewBox="0 0 11 9.600"><path d="M.4 .6h3.800l1 1.200h5.400v7.400h-10.200z" fill="#f7c64a"/><rect x=".4" y="2.600" width="10.200" height="6.600" fill="#fbd768"/><rect x="2.800" y="5.400" width="5.400" height="3.800" fill="#3f8fd6"/><rect x="4.200" y="6.800" width="2.600" height="2.400" fill="#fbd768"/></svg>
<!-- edge -->
<svg class="a" style="left:331px;top:422.500px" width="12.600" height="12.600" viewBox="0 0 11 11"><circle cx="5.500" cy="5.500" r="5" fill="#1b7fd0"/><path d="M.6 6.400a5 5 0 0 0 7.600 3.200a4 4 0 0 1-4.600-5.200a5 5 0 0 0-3 2z" fill="#145ca6"/><path d="M1.600 3.200a5 5 0 0 1 8.900 2.300c.1 1.600-1.800 2.200-3.400 1.700c1-.8.600-3.200-1.800-3.400c-1.500-.1-2.800 .3-3.700 -.6z" fill="#45cf73"/><path d="M6.200 5.400c1 .1 1.500 .8 1.400 1.600l2.600 -.6c-.8 .9-2.400 .8-2.600-.2c-.2-.5-.7-.8-1.400-.8z" fill="#ece6f0"/></svg>
<!-- mail -->
<svg class="a" style="left:355.800px;top:423.800px" width="13" height="11.200" viewBox="0 0 11.400 9.800"><path d="M.4 3.400l5.300-3l5.300 3v6h-10.600z" fill="#1272c4"/><path d="M1.200 3.600h9v3l-4.500 2.400l-4.500-2.400z" fill="#fff"/><path d="M.4 4.400l5.300 3l5.300-3v5h-10.600z" fill="#2b94e6"/></svg>
<!-- swirl -->
<svg class="a" style="left:381.800px;top:423px" width="11.600" height="11.600" viewBox="0 0 11.600 11.600"><circle cx="5.800" cy="5.800" r="5.400" fill="#2d7ad2"/><path d="M5.800 1.600a4.200 4.200 0 1 1-4.200 4.200" fill="none" stroke="#fff" stroke-width=".8"/><path d="M5.800 3.300a2.500 2.500 0 1 1-2.500 2.500" fill="none" stroke="#fff" stroke-width=".75"/><path d="M5.800 4.800a1 1 0 1 1-1 1" fill="none" stroke="#fff" stroke-width=".7"/></svg>
<!-- trello -->
<svg class="a" style="left:407.600px;top:424px" width="10" height="10" viewBox="0 0 10 10"><rect x=".2" y=".2" width="9.600" height="9.600" rx="1" fill="#0a79bf"/><rect x="1.600" y="1.600" width="2.800" height="6.200" rx=".4" fill="#fff"/><rect x="5.600" y="1.600" width="2.800" height="4" rx=".4" fill="#fff"/></svg>
<!-- word -->
<svg class="a" style="left:432.400px;top:424px" width="12" height="10" viewBox="0 0 12 10"><rect x="3" y=".2" width="8.600" height="9.600" rx=".8" fill="#2b7cd3"/><rect x="3" y="5" width="8.600" height="4.800" fill="#185abd"/><rect x=".2" y="2" width="6.400" height="6.400" rx=".6" fill="#103f91"/><text x="3.400" y="7" font-family="Liberation Sans,sans-serif" font-weight="bold" font-size="4.600" fill="#fff" text-anchor="middle">W</text></svg>
<!-- teams -->
<svg class="a" style="left:457.400px;top:423.600px" width="12" height="11" viewBox="0 0 12 11"><circle cx="9.400" cy="2.400" r="1.400" fill="#5059c9"/><rect x="7.600" y="4" width="4" height="4.600" rx="1" fill="#5059c9"/><circle cx="6" cy="1.800" r="1.800" fill="#7b83eb"/><rect x="3" y="4" width="6" height="6" rx="1" fill="#7b83eb"/><rect x=".2" y="2.600" width="6" height="6" rx=".6" fill="#4b53bc"/><text x="3.200" y="7.200" font-family="Liberation Sans,sans-serif" font-weight="bold" font-size="4.600" fill="#fff" text-anchor="middle">T</text><circle cx="9.400" cy="8.800" r="2.100" fill="#8cc63f" stroke="#fff" stroke-width=".3"/></svg>
<!-- excel -->
<div class="a" style="left:476px;top:418.600px;width:25px;height:20.400px;background:#f3eef6"></div>
<svg class="a" style="left:482.400px;top:424px" width="12" height="10" viewBox="0 0 12 10"><rect x="3" y=".2" width="8.600" height="9.600" rx=".8" fill="#21a366"/><rect x="3" y="5" width="8.600" height="4.800" fill="#107c41"/><rect x="7.300" y=".2" width="4.300" height="4.800" fill="#33c481"/><rect x=".2" y="2" width="6.400" height="6.400" rx=".6" fill="#0e5c2f"/><text x="3.400" y="7" font-family="Liberation Sans,sans-serif" font-weight="bold" font-size="4.600" fill="#fff" text-anchor="middle">X</text></svg>
<!-- underlines -->
<div class="a" style="left:251.600px;top:437.800px;width:20.600px;height:1.200px;background:#2f7bd0"></div>
<div class="a" style="left:402.600px;top:437.800px;width:20.600px;height:1.200px;background:#2f7bd0"></div>
<div class="a" style="left:427.800px;top:437.800px;width:20.600px;height:1.200px;background:#2f7bd0"></div>
<div class="a" style="left:453px;top:437.800px;width:20.600px;height:1.200px;background:#2f7bd0"></div>
<div class="a" style="left:476px;top:437.800px;width:25px;height:1.200px;background:#2f7bd0"></div>
<!-- tray -->
<svg class="a" style="left:616.200px;top:425.600px" width="8.400" height="5.600" viewBox="0 0 8.400 5.600"><path d="M.7 4.700l3.500-3.700l3.500 3.700" fill="none" stroke="#2a2a2a" stroke-width=".9"/></svg>
<svg class="a" style="left:633px;top:425px" width="8" height="8" viewBox="0 0 8 8"><path d="M1.200 6.800a5.400 5.400 0 0 1 5.400-5.400M2.600 6.800a4 4 0 0 1 4-4M4 6.800a2.600 2.600 0 0 1 2.600-2.600" fill="none" stroke="#444" stroke-width=".55"/><circle cx="6" cy="6.400" r=".7" fill="#444"/></svg>
<svg class="a" style="left:648.600px;top:425px" width="9" height="8" viewBox="0 0 9 8"><path d="M.6 3h1.400l1.800-1.600v5.200l-1.800-1.600h-1.400z" fill="none" stroke="#333" stroke-width=".6"/><path d="M5.200 2.600a2 2 0 0 1 0 2.800M6.400 1.600a3.400 3.400 0 0 1 0 4.800" fill="none" stroke="#333" stroke-width=".55"/></svg>
<svg class="a" style="left:664.400px;top:426px" width="9.600" height="6" viewBox="0 0 9.600 6"><rect x="1.200" y="1" width="7.600" height="4" fill="#222"/><rect x=".2" y="2.200" width="1" height="1.600" fill="#222"/><path d="M1.800 .6l.8-.6" stroke="#222" stroke-width=".5"/></svg>
<svg class="a" style="left:683px;top:424.600px" width="9.600" height="8.800" viewBox="0 0 9.600 8.800"><circle cx="2.600" cy="6.200" r="1.800" fill="none" stroke="#333" stroke-width=".7"/><circle cx="7" cy="2.600" r="1.800" fill="none" stroke="#333" stroke-width=".7"/><path d="M3.600 5.200l2.400-1.800" stroke="#333" stroke-width=".9"/></svg>
<div class="a" style="left:701px;top:426.400px;font-size:5.800px;line-height:8px;color:#333;letter-spacing:-.15px">ENG</div>
<div class="a c" style="left:714.600px;top:421.900px;width:40px;font-size:6px;line-height:8.500px;color:#222;letter-spacing:-.12px">20:19<br>31-03-2021</div>
<svg class="a" style="left:758.600px;top:424.400px" width="9.600" height="9.600" viewBox="0 0 9.600 9.600"><path d="M.6 .6h8.400v6h-2.800l-1.400 1.800v-1.800h-4.200z" fill="none" stroke="#333" stroke-width=".7"/></svg>

</div></body></html>
